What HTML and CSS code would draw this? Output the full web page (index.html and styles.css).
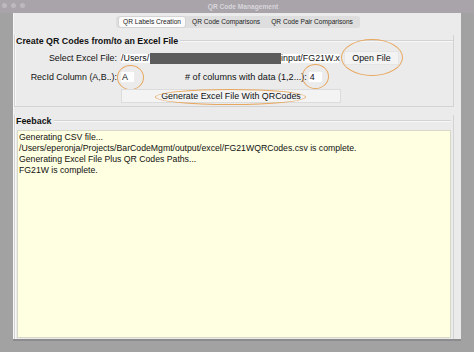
FILE: index.html
```html
<!DOCTYPE html>
<html>
<head>
<meta charset="utf-8">
<link rel="stylesheet" href="styles.css">
</head>
<body>
<div class="titlebar">
  <div class="lights"><span class="light"></span><span class="light"></span><span class="light"></span></div>
  <div class="title">QR Code Management</div>
</div>
<div class="stage">
  <div class="window">
    <div class="tabs">
      <div class="tabgroup">
        <span class="tab active">QR Labels Creation</span>
        <span class="tab">QR Code Comparisons</span>
        <span class="tab">QR Code Pair Comparisons</span>
      </div>
    </div>
    <div class="group group-create">
      <div class="group-head"><span class="group-title">Create QR Codes from/to an Excel File</span></div>
      <div class="group-body">
        <div class="row row1">
          <span class="label">Select Excel File:</span>
          <div class="field field-path"><span class="t">/Users/</span><span class="redact"></span><span class="t">input/FG21W.x</span></div>
          <div class="btn-wrap">
            <span class="btn btn-open">Open File</span>
            <span class="ring ring-open"></span>
          </div>
        </div>
        <div class="row row2">
          <span class="label">RecId Column (A,B..):</span>
          <div class="small-wrap">
            <div class="field field-small">A</div>
            <span class="ring ring-a"></span>
          </div>
          <span class="label2"># of columns with data (1,2...):</span>
          <div class="small-wrap small-4">
            <div class="field field-small">4</div>
            <span class="ring ring-4"></span>
          </div>
        </div>
        <div class="row row3">
          <div class="btn btn-gen">
            <span class="gen-text">Generate Excel File With QRCodes</span>
            <span class="ring ring-gen"></span>
          </div>
        </div>
      </div>
    </div>
    <div class="group group-feed">
      <div class="group-head"><span class="group-title">Feeback</span></div>
      <div class="feed">
        <div class="line">Generating CSV file...</div>
        <div class="line">/Users/eperonja/Projects/BarCodeMgmt/output/excel/FG21WQRCodes.csv is complete.</div>
        <div class="line">Generating Excel File Plus QR Codes Paths...</div>
        <div class="line">FG21W is complete.</div>
      </div>
    </div>
  </div>
</div>
</body>
</html>
```
FILE: styles.css
```css
* { box-sizing: border-box; }
html, body { margin: 0; padding: 0; }
body {
  width: 474px;
  height: 352px;
  background: #a2a2a2;
  font-family: "Liberation Sans", Arial, sans-serif;
  color: #111;
  overflow: hidden;
}
.titlebar {
  height: 13px;
  background: #a8a4aa;
  position: relative;
  display: flex;
  align-items: center;
  justify-content: center;
}
.lights {
  position: absolute;
  left: 2px;
  top: 3px;
  display: flex;
  gap: 4px;
}
.light {
  width: 5px;
  height: 5px;
  border-radius: 50%;
  background: #bdb9bf;
}
.title {
  font-size: 6.6px;
  font-weight: bold;
  color: #d9d6db;
  margin-left: 12px;
}
.stage {
  padding-left: 13px;
  height: 339px;
}
.window {
  width: 448px;
  height: 328px;
  background: #ebebeb;
  border-bottom: 2px solid #8c8c8e;
  box-shadow: inset 1px 0 0 #f6f6f6;
  display: flex;
  flex-direction: column;
}
.tabs {
  display: flex;
  justify-content: center;
  padding-top: 3px;
  padding-left: 2px;
}
.tabgroup {
  display: flex;
  gap: 3px;
  background: #dedede;
  border-radius: 3px;
  padding: 1px 3px;
  height: 12px;
  align-items: center;
}
.tab {
  font-size: 6.6px;
  color: #222;
  padding: 0 4px;
  height: 10px;
  line-height: 10px;
  border-radius: 2px;
}
.tab.active {
  background: #fbfbfb;
  box-shadow: 0 0 0 0.5px #c9c9c9;
}
.group {
  position: relative;
  margin: 0 7px 0 1px;
  border: 1px solid #d3d3d3;
  border-top: none;
  box-shadow: inset 1px 0 0 #f7f7f7;
}
.group-head {
  display: flex;
  align-items: center;
  height: 12px;
  margin-left: 1px;
}
.group-head::after {
  content: "";
  flex: 1;
  height: 1px;
  background: #d3d3d3;
  border-bottom: 1px solid #f7f7f7;
  margin-left: 2px;
}
.group-title {
  font-size: 8.9px;
  font-weight: bold;
  color: #111;
}
.group-create {
  margin-top: 7px;
  height: 72px;
}
.group-body {
  padding-top: 4px;
  display: flex;
  flex-direction: column;
}
.row {
  display: flex;
  align-items: center;
  font-size: 8.9px;
}
.row1 { height: 14px; }
.row2 { height: 14px; margin-top: 5px; }
.row3 { height: 14px; margin-top: 5px; }
.label {
  width: 103px;
  text-align: right;
  padding-right: 1px;
  white-space: nowrap;
}
.label2 {
  margin-left: 50px;
  white-space: nowrap;
  font-size: 9.1px;
}
.field {
  background: #fdfdfd;
  height: 11px;
  display: flex;
  align-items: center;
  font-size: 8.9px;
  overflow: hidden;
  white-space: nowrap;
  box-shadow: inset 0 0 0 0.5px #dedede;
}
.field-path {
  margin-left: 2px;
  width: 220px;
  padding-left: 1px;
}
.redact {
  display: inline-block;
  width: 131px;
  height: 11px;
  background: #5c5c5c;
  margin-left: 1px;
}
.btn-wrap {
  position: relative;
  margin-left: 4px;
}
.btn {
  display: flex;
  align-items: center;
  justify-content: center;
  background: #f3f3f3;
  box-shadow: inset 0 0 0 0.5px #d8d8d8;
  border-radius: 2px;
}
.btn-open {
  width: 55px;
  height: 14px;
  font-size: 8.9px;
}
.ring {
  position: absolute;
  border: 1px solid #e7a75e;
  border-radius: 50%;
  pointer-events: none;
}
.ring-open {
  left: -3px;
  top: -12px;
  width: 62px;
  height: 37px;
}
.small-wrap {
  position: relative;
  margin-left: 2px;
}
.small-4 { margin-left: 1px; }
.field-small {
  width: 15px;
  padding-left: 2px;
  height: 12px;
}
.ring-a {
  left: -3px;
  top: -6px;
  width: 27px;
  height: 25px;
}
.ring-4 {
  left: -6px;
  top: -7px;
  width: 27px;
  height: 25px;
}
.row3 .btn-gen {
  position: relative;
  margin-left: 106px;
  width: 220px;
  height: 14px;
  font-size: 8.9px;
  border-radius: 0;
  box-shadow: inset 0 0 0 1px #dcdcdc;
}
.ring-gen {
  left: 34px;
  top: 0px;
  width: 151px;
  height: 16px;
}
.group-feed {
  margin-top: 8px;
  flex: 1;
  border-bottom: none;
  padding: 2px 2px 0 2px;
}
.group-feed .group-head {
  margin-top: -2px;
  margin-left: -1px;
}
.feed {
  margin-top: 3px;
  height: 208px;
  background: #ffffe1;
  border: 1px solid #d8d8c8;
  padding: 1px 0 0 1px;
}
.line {
  font-size: 8.7px;
  line-height: 11px;
  white-space: nowrap;
}
```
